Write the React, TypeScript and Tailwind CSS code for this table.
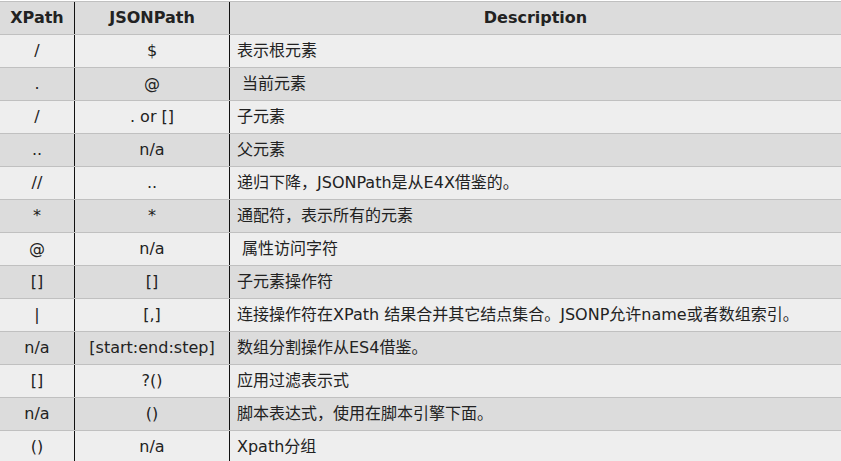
import React from "react";

const rows: [string, string, string][] = [
  ["/", "$", "表示根元素"],
  [".", "@", "\u00a0当前元素"],
  ["/", ". or []", "子元素"],
  ["..", "n/a", "父元素"],
  ["//", "..", "递归下降，JSONPath是从E4X借鉴的。"],
  ["*", "*", "通配符，表示所有的元素"],
  ["@", "n/a", "\u00a0属性访问字符"],
  ["[]", "[]", "子元素操作符"],
  ["|", "[,]", "连接操作符在XPath 结果合并其它结点集合。JSONP允许name或者数组索引。"],
  ["n/a", "[start:end:step]", "数组分割操作从ES4借鉴。"],
  ["[]", "?()", "应用过滤表示式"],
  ["n/a", "()", "脚本表达式，使用在脚本引擎下面。"],
  ["()", "n/a", "Xpath分组"],
];

export default function App() {
  return (
    <div
      className="w-[841px] h-[461px] overflow-hidden bg-white pt-px text-[#222] text-[16px]"
      style={{ fontFamily: '"DejaVu Sans", "Noto Sans CJK SC", sans-serif' }}
    >
      <div className="flex h-[33px] border-t border-[#c0c0c0] bg-[#dcdcdc] font-bold">
        <div className="w-[75px] shrink-0 border-r border-[#111] flex items-center justify-center">XPath</div>
        <div className="w-[155px] shrink-0 border-r border-[#111] flex items-center justify-center">JSONPath</div>
        <div className="flex-1 flex items-center justify-center">Description</div>
      </div>
      {rows.map((r, i) => (
        <div
          key={i}
          className={
            "flex h-[33px] border-t border-[#c0c0c0] " +
            (i % 2 === 0 ? "bg-[#eeeeee]" : "bg-[#dcdcdc]")
          }
        >
          <div className="w-[75px] shrink-0 border-r border-[#111] flex items-center justify-center">{r[0]}</div>
          <div className="w-[155px] shrink-0 border-r border-[#111] flex items-center justify-center whitespace-pre">{r[1]}</div>
          <div className="flex-1 flex items-center pl-[7px] whitespace-nowrap">{r[2]}</div>
        </div>
      ))}
    </div>
  );
}
